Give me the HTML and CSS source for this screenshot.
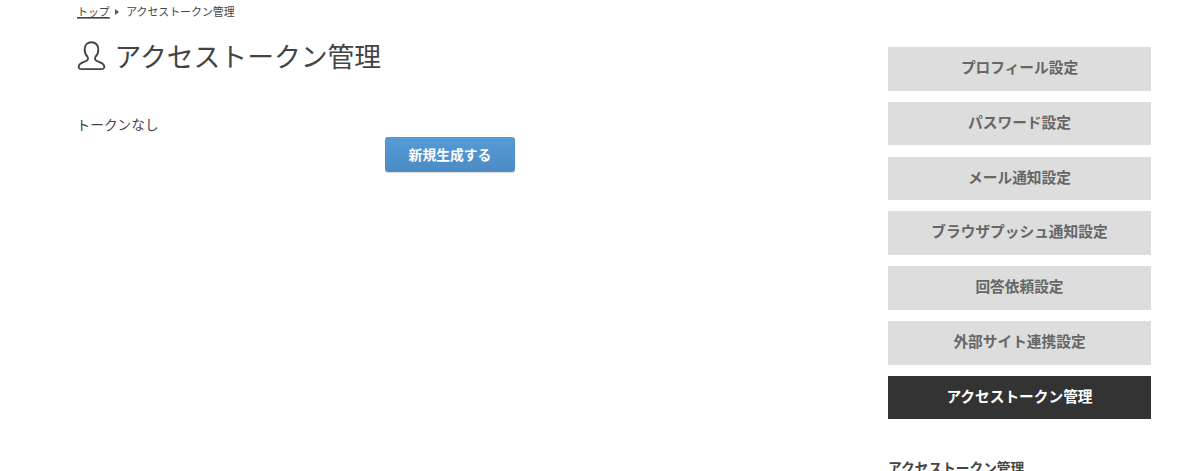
FILE: index.html
```html
<!DOCTYPE html>
<html lang="ja">
<head>
  <meta charset="UTF-8">
  <meta name="viewport" content="width=device-width, initial-scale=1.0">
  <title>アクセストークン管理</title>
  <link rel="stylesheet" href="styles.css">
</head>
<body>
  <div class="wrapper">
    <main class="content">
      <div class="breadcrumb">
        <a href="#">トップ</a>
        <span class="breadcrumb-arrow"></span>
        <span>アクセストークン管理</span>
      </div>
      <h1 class="page-title">
        <svg class="title-icon" viewBox="0 0 28 28" width="29" height="29" fill="none" stroke="#444" stroke-width="1.8" stroke-linejoin="round" stroke-linecap="round">
          <path d="M14 1.200c-4 0-6.600 2.900-6.600 6.900 0 3 1.100 5.500 2.700 7.100.6.7.6 1.600.4 2.500-.4 1.100-1.600 1.700-3.100 2.300-2.800 1-5.200 2-5.700 4.300-.3 1.300.4 2.800 2 2.800h20.600c1.600 0 2.300-1.500 2-2.800-.5-2.300-2.900-3.300-5.700-4.300-1.500-.6-2.700-1.200-3.100-2.300-.2-.9-.2-1.800.4-2.500 1.600-1.600 2.700-4.100 2.700-7.100 0-4-2.600-6.900-6.600-6.900z"/>
        </svg>
        <span>アクセストークン管理</span>
      </h1>
      <p class="empty-text">トークンなし</p>
      <div class="actions">
        <a href="#" class="btn-primary">新規生成する</a>
      </div>
    </main>
    <aside class="sidebar">
      <ul class="side-menu">
        <li><a href="#">プロフィール設定</a></li>
        <li><a href="#">パスワード設定</a></li>
        <li><a href="#">メール通知設定</a></li>
        <li><a href="#">ブラウザプッシュ通知設定</a></li>
        <li><a href="#">回答依頼設定</a></li>
        <li><a href="#">外部サイト連携設定</a></li>
        <li><a href="#" class="active">アクセストークン管理</a></li>
      </ul>
      <h3 class="side-title">アクセストークン管理</h3>
    </aside>
  </div>
</body>
</html>
```

FILE: styles.css
```css
* { box-sizing: border-box; margin: 0; padding: 0; }
html, body { height: 471px; overflow: hidden; }
body { font-family: "Noto Sans CJK JP", "Noto Sans", sans-serif; background-color: #fff; color: #444; }
a { color: inherit; }
.wrapper { display: flex; justify-content: space-between; width: 1074px; margin-left: 77px; }
.content { width: 746px; padding-top: 3px; }
.breadcrumb { display: flex; align-items: center; height: 16px; font-size: 10.9px; color: #444; }
.breadcrumb a { border-bottom: 1px solid #888; line-height: 14px; }
.breadcrumb-arrow { width: 0; height: 0; margin: 1px 7px 0 5.500px; border-left: 4px solid #555; border-top: 3px solid transparent; border-bottom: 3px solid transparent; }
.page-title { display: flex; align-items: center; gap: 9px; height: 40px; margin-top: 16.500px; margin-left: -0.5px; font-size: 26.8px; font-weight: 400; color: #444; }
.title-icon { flex: none; }
.empty-text { margin-top: 38.500px; margin-left: -0.5px; font-size: 13.7px; line-height: 20px; }
.actions { display: flex; justify-content: center; margin-top: 3px; }
.btn-primary { display: block; width: 130px; height: 35px; line-height: 34px; text-align: center; font-size: 13.8px; font-weight: 700; color: #fff; text-decoration: none; background: linear-gradient(#549bd6, #4d8bc4); border-radius: 3px; box-shadow: 0 1px 1px rgba(0, 0, 0, 0.15); }
.sidebar { width: 263px; padding-top: 47px; }
.side-menu { list-style: none; }
.side-menu li { margin-bottom: 11.2px; }
.side-menu a { display: block; height: 43.6px; line-height: 40px; text-align: center; font-size: 14.7px; font-weight: 700; color: #666; text-decoration: none; background-color: #ddd; }
.side-menu a.active { background-color: #333; color: #fff; }
.side-title { margin-top: 38px; font-size: 13.7px; font-weight: 700; color: #444; line-height: 20px; }
```
